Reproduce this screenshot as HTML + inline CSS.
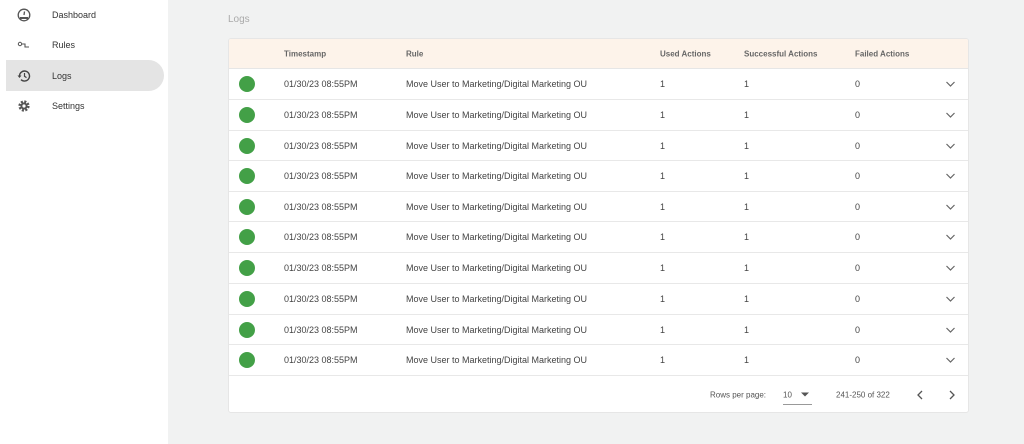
<!DOCTYPE html>
<html><head><style>
*{margin:0;padding:0;box-sizing:border-box}
body{width:1024px;height:444px;background:#f1f2f2;font-family:"Liberation Sans",sans-serif;position:relative;overflow:hidden;color:#333}
.side{position:absolute;left:0;top:0;width:168px;height:444px;background:#fff}
.item{position:absolute;left:0;height:31px;width:164px;font-size:9px;color:#333}
.item span{position:absolute;left:52px;top:50%;transform:translateY(-50%)}
.item svg{position:absolute;left:17px;top:50%;transform:translateY(-50%)}
.act{left:6px;width:158px;background:#e4e4e4;border-radius:0 16px 16px 0}
.act span{left:46px}.act svg{left:11px}
.title{position:absolute;left:228px;top:14px;font-size:10px;color:#aaa}
.card{position:absolute;left:228px;top:38px;width:741px;height:375px;background:#fff;border:1px solid #e6e6e6;border-radius:3px;overflow:hidden}
.hd{height:30px;background:#fdf3ea;position:relative;border-bottom:1px solid #e6e6e6;font-size:8px;color:#666;font-weight:bold}
.row{position:relative;border-bottom:1px solid #e8e8e8;font-size:9px;color:#444}
.c{position:absolute;top:50%;transform:translateY(-50%);white-space:nowrap}
.dot{position:absolute;left:10px;top:50%;margin-top:-8px;width:16px;height:16px;border-radius:50%;background:#43a047}
.ft{position:relative;height:37px;font-size:8px;color:#555}
</style></head><body>
<div class="side">
<div class="item" style="top:-1px"><svg width="14" height="14" viewBox="0 0 14 14"><circle cx="7" cy="7" r="5.8" fill="none" stroke="#555" stroke-width="1.3"/><path d="M7 7L7.5 3.5" stroke="#555" stroke-width="1.3"/><path d="M3 10h8" stroke="#555" stroke-width="2"/></svg><span>Dashboard</span></div>
<div class="item" style="top:29px"><svg width="14" height="14" viewBox="0 0 14 14"><circle cx="3" cy="6" r="1.7" fill="none" stroke="#555" stroke-width="1"/><path d="M5 6h3v3h4" fill="none" stroke="#555" stroke-width="1.1"/></svg><span>Rules</span></div>
<div class="item act" style="top:60px"><svg width="14" height="14" viewBox="0 0 14 14"><path d="M2.5 7a5 5 0 1 1 1.5 3.6" fill="none" stroke="#444" stroke-width="1.4"/><path d="M0.5 6.5h4l-2 2.5z" fill="#444"/><path d="M7.5 4v3.3l2 1.3" fill="none" stroke="#444" stroke-width="1.2"/></svg><span>Logs</span></div>
<div class="item" style="top:90px"><svg width="14" height="14" viewBox="0 0 14 14"><circle cx="7" cy="7" r="4.3" fill="none" stroke="#555" stroke-width="2.6" stroke-dasharray="2 1.4"/><circle cx="7" cy="7" r="3.6" fill="#555"/><circle cx="7" cy="7" r="1.6" fill="#fff"/></svg><span>Settings</span></div>
</div>
<div class="title">Logs</div>
<div class="card">
<div class="hd"><span class="c" style="left:55px">Timestamp</span><span class="c" style="left:177px">Rule</span><span class="c" style="left:431px">Used Actions</span><span class="c" style="left:515px">Successful Actions</span><span class="c" style="left:626px">Failed Actions</span></div>
<div id="rows"></div>
<script>
var h=[31,31,30,31,30,31,31,31,30,31],s='';
h.forEach(function(x){s+='<div class="row" style="height:'+x+'px"><div class="dot"></div><span class="c" style="left:55px">01/30/23 08:55PM</span><span class="c" style="left:177px">Move User to Marketing/Digital Marketing OU</span><span class="c" style="left:431px">1</span><span class="c" style="left:515px">1</span><span class="c" style="left:626px">0</span><svg class="c" style="left:716px" width="11" height="8" viewBox="0 0 11 8"><path d="M1.5 2l4 4 4-4" fill="none" stroke="#666" stroke-width="1.2"/></svg></div>'});
document.getElementById('rows').innerHTML=s;
</script>
<div class="ft"><span class="c" style="left:481px">Rows per page:</span><span class="c" style="left:554px">10</span><svg class="c" style="left:572px" width="8" height="5" viewBox="0 0 8 5"><path d="M0 0h8L4 4z" fill="#555"/></svg><div style="position:absolute;left:554px;top:28px;width:29px;border-top:1px solid #999"></div><span class="c" style="left:607px">241-250 of 322</span><svg class="c" style="left:687px" width="8" height="10" viewBox="0 0 8 10"><path d="M6 1L2 5l4 4" fill="none" stroke="#555" stroke-width="1.3"/></svg><svg class="c" style="left:719px" width="8" height="10" viewBox="0 0 8 10"><path d="M2 1l4 4-4 4" fill="none" stroke="#555" stroke-width="1.3"/></svg></div>
</div>
</body></html>
